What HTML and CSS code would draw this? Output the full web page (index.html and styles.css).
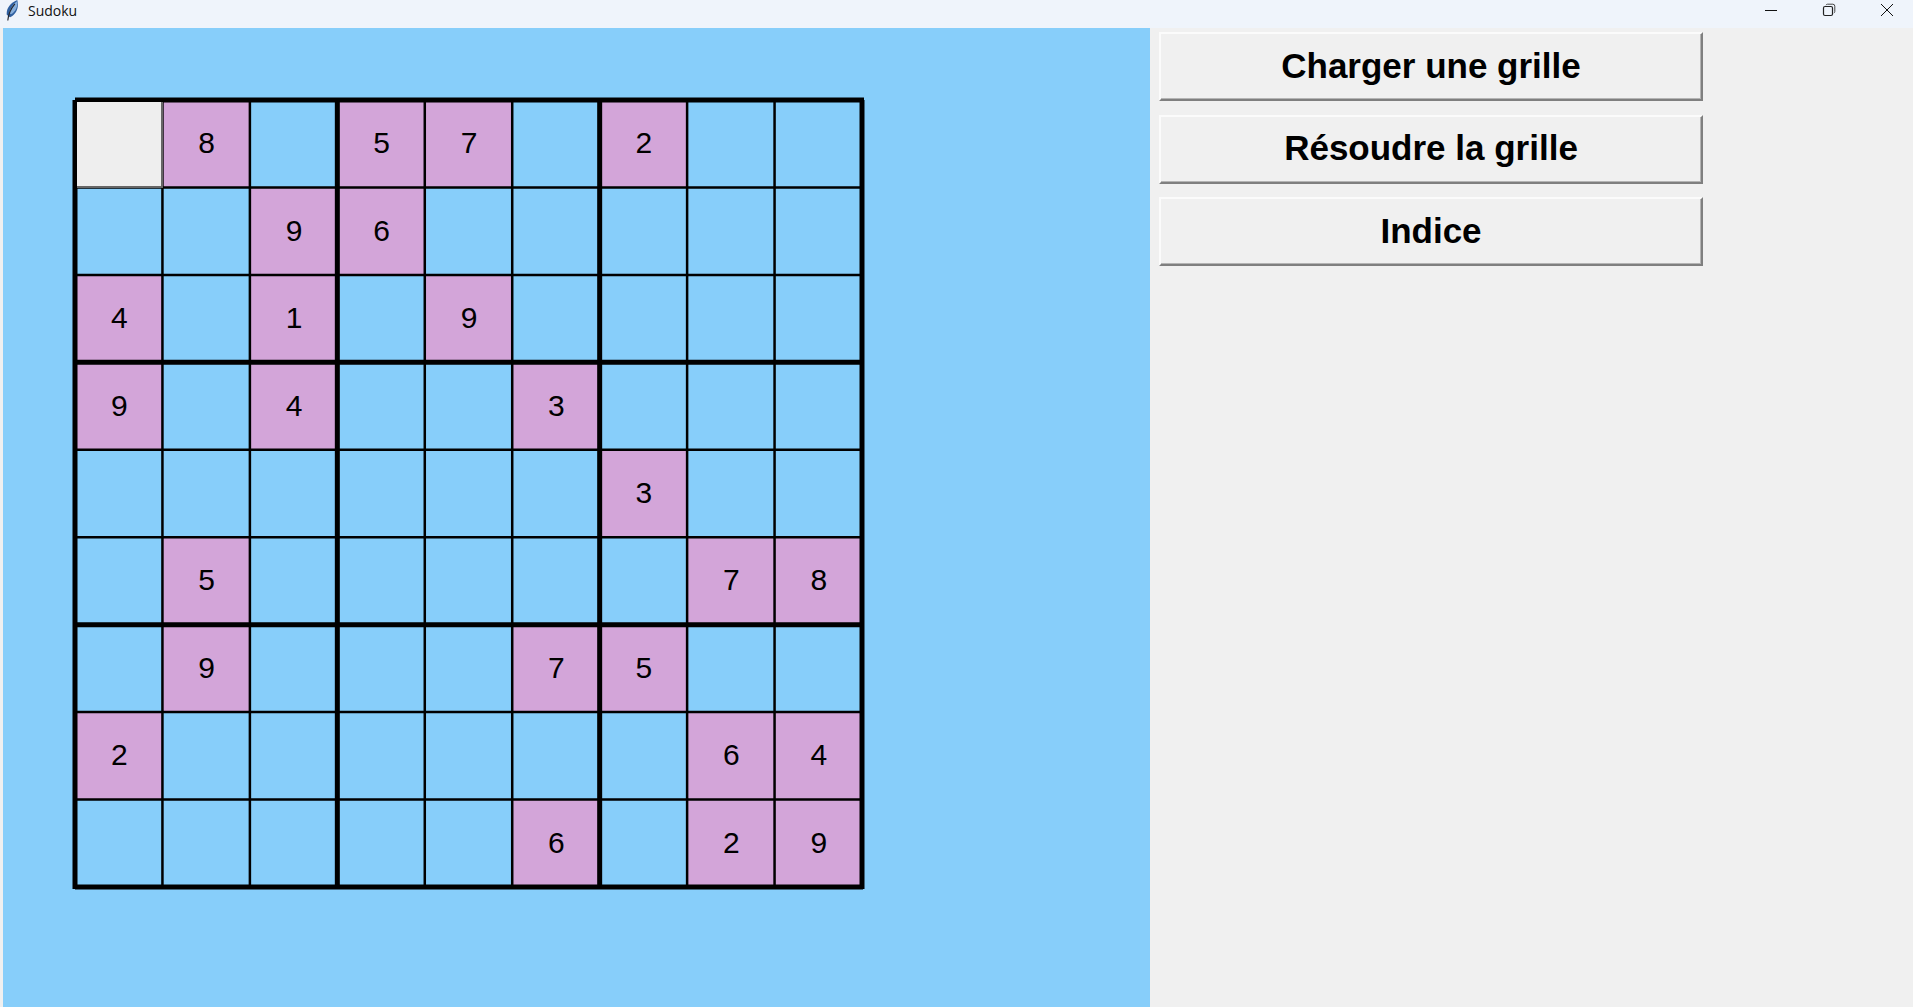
FILE: index.html
```html
<!DOCTYPE html>
<html lang="fr">
<head>
<meta charset="utf-8">
<title>Sudoku</title>
<link rel="stylesheet" href="styles.css">
</head>
<body>
<div class="window">
  <header class="titlebar">
    <div class="title-left">
      <svg class="feather" viewBox="0 0 14 22" aria-hidden="true">
        <path d="M1.5 15 C1 9 5 3 12.5 0 C14.5 7 12 15 5 18 L3 17 Z" fill="#2f5f9f"/>
        <path d="M4 14 C5 9 8 4 12.5 1 C13.5 6 11 12 6 15 Z" fill="#86aedb"/>
        <path d="M2.6 21.5 C3 16 5 10 10 4" fill="none" stroke="#23262e" stroke-width="1.2"/>
      </svg>
      <span class="title-text">Sudoku</span>
    </div>
    <div class="controls">
      <svg class="ctl" viewBox="0 0 14 14" aria-hidden="true"><path d="M1 7.5H13" stroke="#111" stroke-width="1"/></svg>
      <svg class="ctl" viewBox="0 0 14 14" aria-hidden="true"><rect x="1.5" y="3.5" width="9" height="9" rx="1.5" fill="none" stroke="#222" stroke-width="1.2"/><path d="M4 2.2 Q4.4 1.2 5.5 1.2 H10.8 Q12.8 1.2 12.8 3.2 V8.5 Q12.8 9.6 11.8 10" fill="none" stroke="#444" stroke-width="1"/></svg>
      <svg class="ctl" viewBox="0 0 14 14" aria-hidden="true"><path d="M1 1L13 13M13 1L1 13" stroke="#111" stroke-width="1"/></svg>
    </div>
  </header>
  <main class="content">
    <section class="canvas">
      <div class="board">
        <div class="cell selected"></div><div class="cell given">8</div><div class="cell"></div><div class="cell given">5</div><div class="cell given">7</div><div class="cell"></div><div class="cell given">2</div><div class="cell"></div><div class="cell"></div>
        <div class="cell"></div><div class="cell"></div><div class="cell given">9</div><div class="cell given">6</div><div class="cell"></div><div class="cell"></div><div class="cell"></div><div class="cell"></div><div class="cell"></div>
        <div class="cell given">4</div><div class="cell"></div><div class="cell given">1</div><div class="cell"></div><div class="cell given">9</div><div class="cell"></div><div class="cell"></div><div class="cell"></div><div class="cell"></div>
        <div class="cell given">9</div><div class="cell"></div><div class="cell given">4</div><div class="cell"></div><div class="cell"></div><div class="cell given">3</div><div class="cell"></div><div class="cell"></div><div class="cell"></div>
        <div class="cell"></div><div class="cell"></div><div class="cell"></div><div class="cell"></div><div class="cell"></div><div class="cell"></div><div class="cell given">3</div><div class="cell"></div><div class="cell"></div>
        <div class="cell"></div><div class="cell given">5</div><div class="cell"></div><div class="cell"></div><div class="cell"></div><div class="cell"></div><div class="cell"></div><div class="cell given">7</div><div class="cell given">8</div>
        <div class="cell"></div><div class="cell given">9</div><div class="cell"></div><div class="cell"></div><div class="cell"></div><div class="cell given">7</div><div class="cell given">5</div><div class="cell"></div><div class="cell"></div>
        <div class="cell given">2</div><div class="cell"></div><div class="cell"></div><div class="cell"></div><div class="cell"></div><div class="cell"></div><div class="cell"></div><div class="cell given">6</div><div class="cell given">4</div>
        <div class="cell"></div><div class="cell"></div><div class="cell"></div><div class="cell"></div><div class="cell"></div><div class="cell given">6</div><div class="cell"></div><div class="cell given">2</div><div class="cell given">9</div>
        <svg class="lines" viewBox="0 0 787 787" aria-hidden="true">
          <g class="thin">
            <path d="M87.44 0V787M174.89 0V787M349.78 0V787M437.22 0V787M612.11 0V787M699.56 0V787"/>
            <path d="M0 87.44H787M0 174.89H787M0 349.78H787M0 437.22H787M0 612.11H787M0 699.56H787"/>
          </g>
          <g class="thick">
            <path d="M0 0V789M262.33 0V787M524.67 0V787M787 0V789"/>
            <path d="M0 0H789M0 262.33H787M0 524.67H787M0 787H788"/>
          </g>
        </svg>
      </div>
    </section>
    <aside class="sidebar">
      <button class="action" type="button">Charger une grille</button>
      <button class="action" type="button">Résoudre la grille</button>
      <button class="action" type="button">Indice</button>
    </aside>
  </main>
</div>
</body>
</html>
```
FILE: styles.css
```css
* { box-sizing: border-box; }
html, body { margin: 0; height: 100%; overflow: hidden; }
body { background: #f0f0f0; font-family: "Liberation Sans", Arial, sans-serif; }

.window { display: flex; flex-direction: column; height: 100vh; }

.titlebar {
  display: flex;
  justify-content: space-between;
  align-items: center;
  height: 28px;
  flex: none;
  background: #eff4fb;
}
.title-left { display: flex; align-items: center; padding-left: 5px; margin-top: -7px; }
.feather { width: 14px; height: 21px; }
.title-text {
  margin-left: 9px;
  font: 14px "Open Sans", "Noto Sans", sans-serif;
  color: #111;
}
.controls { display: flex; align-items: center; gap: 44px; padding-right: 19px; margin-top: -9px; }
.ctl { width: 14px; height: 14px; display: block; }

.content { display: flex; flex: 1; min-height: 0; padding-left: 3px; }

.canvas {
  width: 1147px;
  flex: none;
  background: #87cefa;
  padding: 72px 0 0 72px;
}

.board {
  position: relative;
  display: grid;
  grid-template-columns: repeat(9, 87.44px);
  grid-template-rows: repeat(9, 87.44px);
  width: 787px;
  height: 787px;
}
.cell {
  display: flex;
  align-items: center;
  justify-content: center;
  font-size: 30px;
  color: #000;
  padding: 0 0 1px 1px;
}
.given { background: #d3a5d9; }
.selected {
  position: relative;
  z-index: 1;
  background: #eeeeee;
  margin: 1.5px -1px -1px 1.5px;
  border-right: 2px solid #666;
  border-bottom: 2px solid #666;
}
.lines { position: absolute; inset: 0; width: 787px; height: 787px; overflow: visible; pointer-events: none; }
.thin path { stroke: #000; stroke-width: 2.5; fill: none; }
.thick path { stroke: #000; stroke-width: 5; fill: none; }

.sidebar {
  display: flex;
  flex-direction: column;
  gap: 13.5px;
  padding: 4px 0 0 9px;
}
.action {
  width: 544px;
  height: 69px;
  background: #f0f0f0;
  border: 2px solid;
  border-color: #fbfbfb #7f7f7f #7f7f7f #fbfbfb;
  box-shadow: inset -1px -1px 0 #b4b4b4;
  font: bold 35px "Liberation Sans", Arial, sans-serif;
  color: #000;
  padding: 0 0 2px;
}
```
